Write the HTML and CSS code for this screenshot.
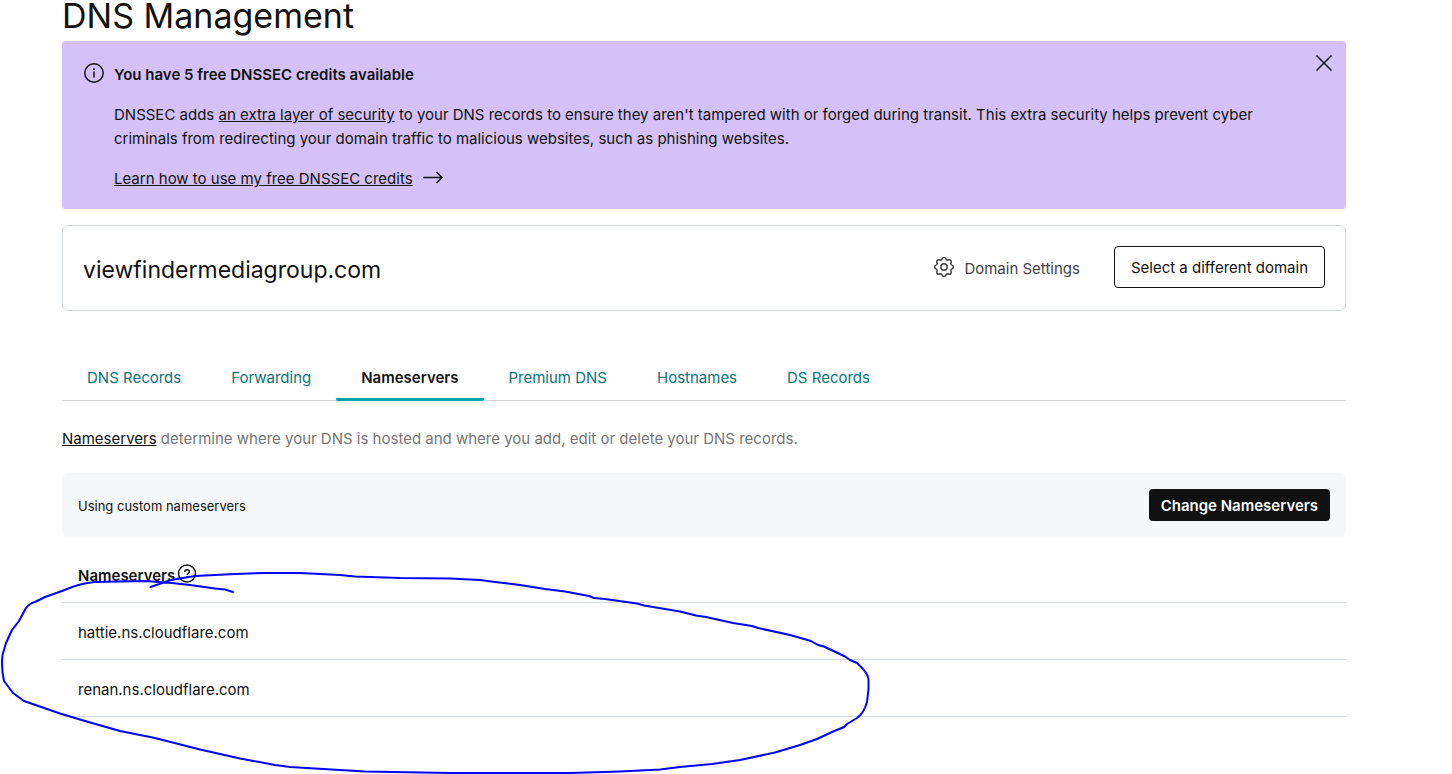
FILE: index.html
```
<!DOCTYPE html>
<html lang="en">
<head>
    <meta charset="UTF-8">
    <meta name="viewport" content="width=device-width, initial-scale=1.0">
    <title>DNS Management</title>
    <link rel="stylesheet" href="styles.css">
</head>
<body>
    <main class="page">
        <h1 class="page-title">DNS Management</h1>

        <section class="banner">
            <svg class="icon info-icon" viewBox="0 0 20 20" aria-hidden="true">
                <circle cx="10" cy="10" r="9.2"/>
                <path d="M10 8.5v6M10 5.2v1.9"/>
            </svg>
            <div class="banner-body">
                <h2>You have 5 free DNSSEC credits available</h2>
                <p>DNSSEC adds <a href="#">an extra layer of security</a> to your DNS records to ensure they aren't tampered with or forged during transit. This extra security helps prevent cyber criminals from redirecting your domain traffic to malicious websites, such as phishing websites.</p>
                <a class="banner-link" href="#">
                    <span>Learn how to use my free DNSSEC credits</span>
                    <svg class="icon" viewBox="0 0 20 20" aria-hidden="true">
                        <path d="M0 8.5h19M13.500 3l5.500 5.500-5.500 5.500"/>
                    </svg>
                </a>
            </div>
            <button class="close" aria-label="Close">
                <svg class="icon" viewBox="0 0 20 20" aria-hidden="true">
                    <path d="M2.500 2.500l15 15M17.500 2.500l-15 15"/>
                </svg>
            </button>
        </section>

        <section class="domain-card">
            <div class="domain-name">viewfindermediagroup.com</div>
            <a class="settings" href="#">
                <svg class="icon" viewBox="2 2 20 20" aria-hidden="true">
                    <path d="M20 10.100A2 2 0 0 1 20 13.900A2 2 0 0 0 19 16.300A2 2 0 0 1 16.300 19A2 2 0 0 0 13.900 20A2 2 0 0 1 10.100 20A2 2 0 0 0 7.700 19A2 2 0 0 1 5 16.300A2 2 0 0 0 4 13.900A2 2 0 0 1 4 10.100A2 2 0 0 0 5 7.700A2 2 0 0 1 7.700 5A2 2 0 0 0 10.100 4A2 2 0 0 1 13.900 4A2 2 0 0 0 16.300 5A2 2 0 0 1 19 7.700A2 2 0 0 0 20 10.100Z"/>
                    <circle cx="12" cy="12" r="3.2"/>
                </svg>
                <span>Domain Settings</span>
            </a>
            <button class="select-domain">Select a different domain</button>
        </section>

        <nav class="tabs">
            <a href="#">DNS Records</a>
            <a href="#">Forwarding</a>
            <a href="#" class="active" aria-current="page">Nameservers</a>
            <a href="#">Premium DNS</a>
            <a href="#">Hostnames</a>
            <a href="#">DS Records</a>
        </nav>

        <p class="description"><a href="#">Nameservers</a> determine where your DNS is hosted and where you add, edit or delete your DNS records.</p>

        <div class="toolbar">
            <span>Using custom nameservers</span>
            <button class="change">Change Nameservers</button>
        </div>

        <section class="nameservers">
            <table>
                <thead>
                    <tr>
                        <th scope="col">
                            <div class="heading">
                                Nameservers
                                <svg class="icon" viewBox="0 0 20 20" aria-hidden="true">
                                    <circle cx="10" cy="9.500" r="8.500"/>
                                    <path d="M7.800 7.900c0-3 4.600-2.900 4.600-.2 0 1.900-2.300 1.700-2.300 3.400M10.100 12.300v1.700"/>
                                </svg>
                            </div>
                        </th>
                    </tr>
                </thead>
                <tbody>
                    <tr><td>hattie.ns.cloudflare.com</td></tr>
                    <tr><td>renan.ns.cloudflare.com</td></tr>
                </tbody>
            </table>
            <!-- pen stroke around the nameserver list -->
            <svg class="pen" viewBox="0 566 872 208" aria-hidden="true">
                <path d="M150.500 587L162 583L171 580L195 576L235 574L265 573L300 573L340 575L355 576.500L400 578L450 578.500L480 580L495 582L520 585L545 589L565 591.500L589 596L594 598L605 599L637 603.500L644 605.500L680 611.500L696 615.500L706 617L733 623L752 626L758 628L790 635L811 641L818 645L824 646.500L845 656.500L850 660L857 663Q868 673 868.500 679L868.500 689L867 702Q864 713 857 718L847 724L844 727L832 732L817 739L800 745L775 752.500L740 760L712 764L680 767L660 769.500L620 771.500L570 773L450 773L365 771.500L290 767L275 765L240 758.500L200 749.500L155 738L120 731L85 721L60 713.500L24 701L13 693L4 681Q1 668 2.500 655L6 643L12 630L19 621L26 608Q30 603 35 602L45 597L62 591Q80 583 95 582L145 581L172 583L190 585L215 588.500L225 589.500L233 592"/>
            </svg>
        </section>
    </main>
</body>
</html>
```

FILE: styles.css
```
* {
    margin: 0;
    padding: 0;
    box-sizing: border-box;
}
body {
    font-family: "Inter", "Liberation Sans", sans-serif;
    font-size: 15px;
    line-height: 24px;
    color: #111;
    background: #fff;
}
a {
    color: inherit;
}
button {
    font: inherit;
    color: inherit;
    cursor: pointer;
}
.page {
    min-height: 100vh;
    padding: 0 106px 56px 62px;
}
.page-title {
    margin-bottom: 9px;
    font-size: 34px;
    font-weight: 400;
    line-height: 32px;
}
.icon {
    flex: none;
    width: 20px;
    height: 20px;
    fill: none;
    stroke: currentColor;
    stroke-width: 1.5;
}
.banner {
    position: relative;
    display: flex;
    gap: 10px;
    padding: 22px 56px 18px 22px;
    background: #d3c1f7;
    border-radius: 4px;
}
.banner-body {
    display: flex;
    flex-direction: column;
    align-items: flex-start;
    gap: 16px;
}
.banner h2 {
    font-size: 15px;
    font-weight: 600;
    line-height: 24px;
}
.banner-link {
    display: flex;
    align-items: center;
    gap: 10px;
    text-decoration: none;
}
.banner-link span {
    text-decoration: underline;
}
.close {
    position: absolute;
    top: 12px;
    right: 12px;
    width: 20px;
    height: 20px;
    border: none;
    background: none;
}
.close .icon {
    display: block;
}
.domain-card {
    display: flex;
    align-items: center;
    margin-top: 16px;
    padding: 20px 20px 22px;
    border: 1px solid #d4dbe0;
    border-radius: 6px;
}
.domain-name {
    flex: 1;
    padding-top: 6px;
    font-size: 23px;
    line-height: 32px;
}
.settings {
    display: flex;
    align-items: center;
    gap: 10px;
    margin-right: 34px;
    color: #444;
    text-decoration: none;
}
.settings span {
    padding-top: 3px;
}
.select-domain {
    padding: 9px 16px 7px;
    border: 1px solid #111;
    border-radius: 4px;
    background: #fff;
}
.tabs {
    display: flex;
    margin-top: 44px;
    border-bottom: 1px solid #d3d3d3;
}
.tabs a {
    margin-bottom: -1px;
    padding: 11px 25px 8px;
    border-bottom: 3px solid transparent;
    color: #09757a;
    text-decoration: none;
}
.tabs .active {
    border-color: #00a4a6;
    border-radius: 2px;
    font-weight: 600;
    color: #111;
}
.description {
    margin: 26px 0 22px;
    color: #767676;
}
.description a {
    color: #111;
}
.toolbar {
    display: flex;
    align-items: center;
    justify-content: space-between;
    padding: 16px;
    border-radius: 6px;
    background: #f5f7f8;
    font-size: 13px;
}
.toolbar span {
    padding-top: 2px;
}
.change {
    padding: 5px 12px 3px;
    border: none;
    border-radius: 4px;
    background: #111;
    color: #fff;
    font-size: 15px;
    font-weight: 600;
}
.nameservers {
    position: relative;
    margin-top: 9px;
}
table {
    width: 100%;
    border-collapse: collapse;
}
th,
td {
    padding: 18px 16px 14px;
    border-bottom: 1px solid #d4dbe0;
    text-align: left;
}
th {
    font-weight: 600;
}
.heading {
    display: flex;
    align-items: flex-start;
    gap: 2px;
}
.pen {
    position: absolute;
    top: 20px;
    left: -62px;
    width: 872px;
    height: 208px;
    fill: none;
    stroke: #00f;
    stroke-width: 2;
    stroke-linecap: round;
    stroke-linejoin: round;
    pointer-events: none;
}
```
